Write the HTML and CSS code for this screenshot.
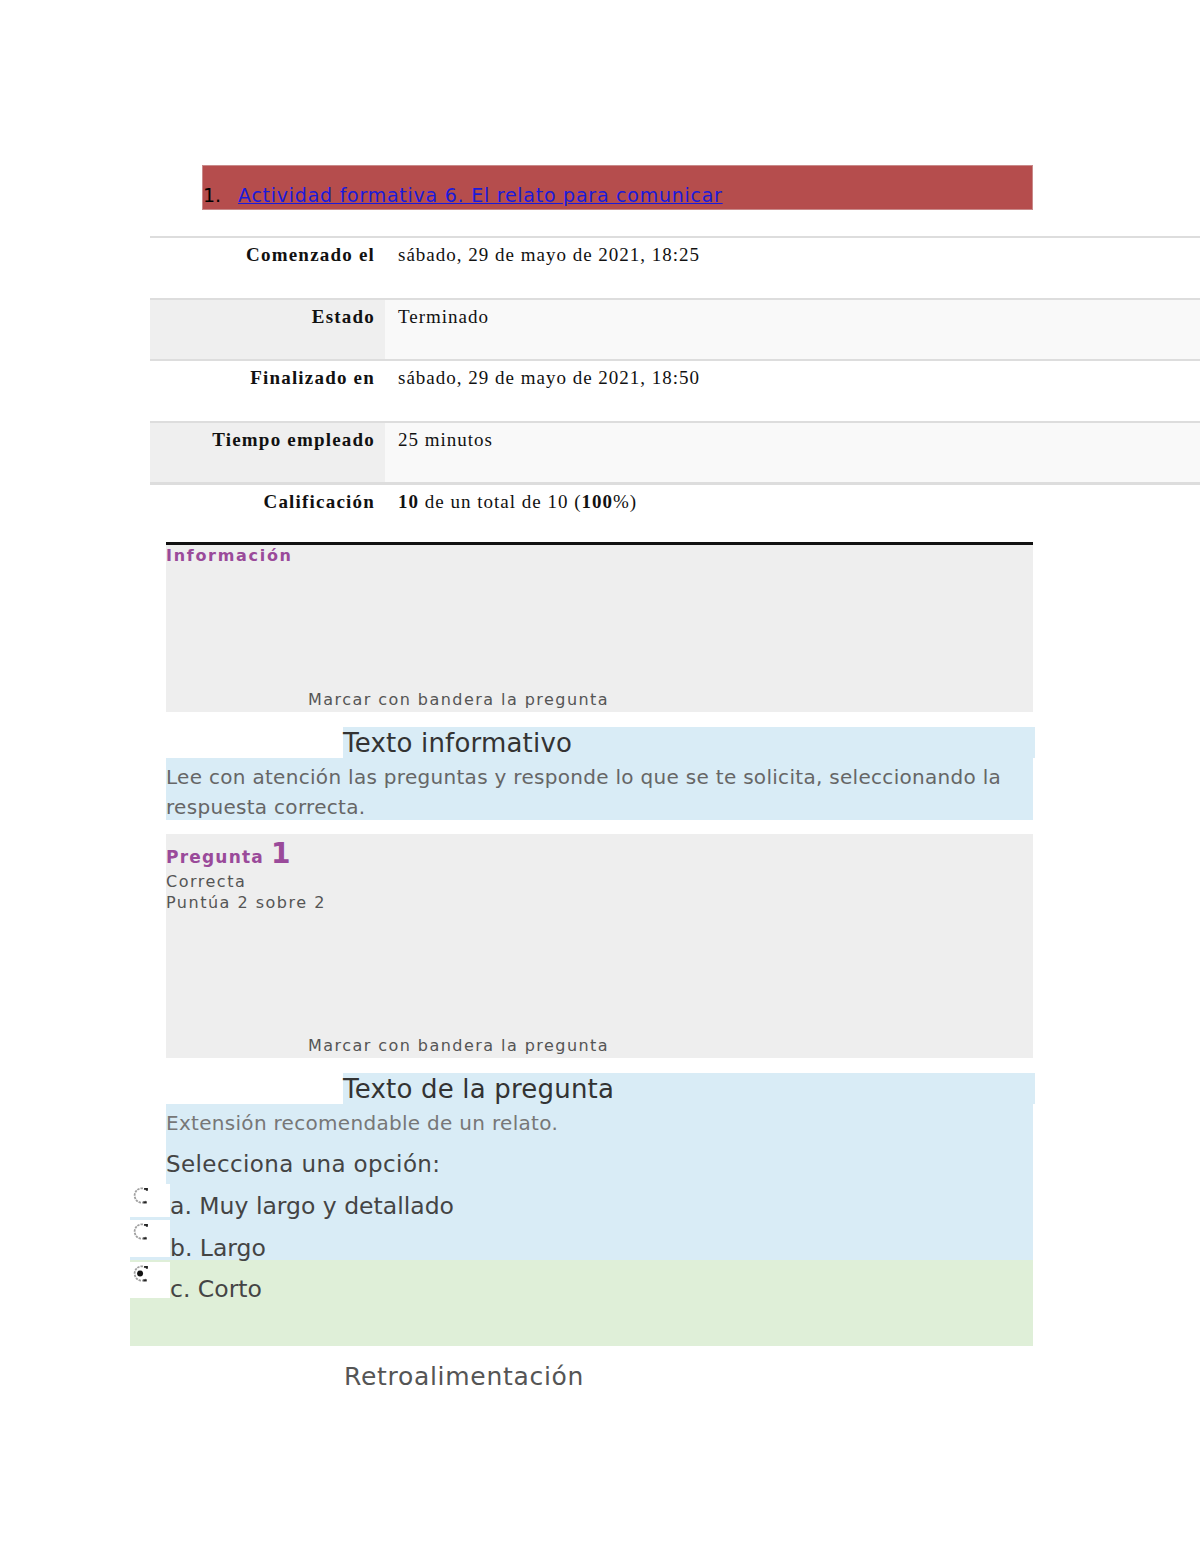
FILE: index.html
```html
<!DOCTYPE html>
<html lang="es">
<head>
<meta charset="utf-8">
<title>Actividad formativa 6</title>
<link rel="stylesheet" href="styles.css">
</head>
<body>
<div class="page">
  <div class="crumb"><span class="num">1.</span><a href="#" class="crumb-link">Actividad formativa 6. El relato para comunicar</a></div>

  <div class="summary">
    <div class="row">
      <div class="lbl">Comenzado el</div>
      <div class="val">sábado, 29 de mayo de 2021, 18:25</div>
    </div>
    <div class="row alt">
      <div class="lbl">Estado</div>
      <div class="val">Terminado</div>
    </div>
    <div class="row">
      <div class="lbl">Finalizado en</div>
      <div class="val">sábado, 29 de mayo de 2021, 18:50</div>
    </div>
    <div class="row alt">
      <div class="lbl">Tiempo empleado</div>
      <div class="val">25 minutos</div>
    </div>
    <div class="row last">
      <div class="lbl">Calificación</div>
      <div class="val"><b>10</b> de un total de 10 (<b>100</b>%)</div>
    </div>
  </div>

  <div class="qinfo info">
    <div class="qtitle">Información</div>
    <div class="flag">Marcar con bandera la pregunta</div>
  </div>

  <div class="content">
    <div class="content-head">Texto informativo</div>
    <div class="content-body">
      <p class="para">Lee con atención las preguntas y responde lo que se te solicita, seleccionando la respuesta correcta.</p>
    </div>
  </div>

  <div class="qinfo question">
    <div class="qtitle">Pregunta <span class="qno">1</span></div>
    <div class="state">Correcta</div>
    <div class="state">Puntúa 2 sobre 2</div>
    <div class="flag">Marcar con bandera la pregunta</div>
  </div>

  <div class="content">
    <div class="content-head">Texto de la pregunta</div>
    <div class="content-body qbody">
      <p class="qtext">Extensión recomendable de un relato.</p>
      <p class="prompt">Selecciona una opción:</p>
    </div>
    <div class="options">
      <div class="opt opt-a">
        <div class="radio-cell"><svg class="radio" viewBox="0 0 16 16" width="19" height="19"><path d="M11.8 3.2 A6 6 0 1 0 11.8 12.8" fill="none" stroke="#a0a0a0" stroke-width="1.5" stroke-dasharray="2 0.8"/><path d="M10.2 2.4 L12.6 2.4 L12.6 4" fill="none" stroke="#222" stroke-width="1.6"/><path d="M9.6 13.8 L12.4 13.8" stroke="#222" stroke-width="1.8"/></svg></div>
        <div class="opt-text">a. Muy largo y detallado</div>
      </div>
      <div class="opt opt-b">
        <div class="radio-cell"><svg class="radio" viewBox="0 0 16 16" width="19" height="19"><path d="M11.8 3.2 A6 6 0 1 0 11.8 12.8" fill="none" stroke="#a0a0a0" stroke-width="1.5" stroke-dasharray="2 0.8"/><path d="M10.2 2.4 L12.6 2.4 L12.6 4" fill="none" stroke="#222" stroke-width="1.6"/><path d="M9.6 13.8 L12.4 13.8" stroke="#222" stroke-width="1.8"/></svg></div>
        <div class="opt-text">b. Largo</div>
      </div>
      <div class="opt opt-c">
        <div class="radio-cell"><svg class="radio" viewBox="0 0 16 16" width="19" height="19"><path d="M11.8 3.2 A6 6 0 1 0 11.8 12.8" fill="none" stroke="#a0a0a0" stroke-width="1.5" stroke-dasharray="2 0.8"/><path d="M10.2 2.4 L12.6 2.4 L12.6 4" fill="none" stroke="#222" stroke-width="1.6"/><path d="M9.6 13.8 L12.4 13.8" stroke="#222" stroke-width="1.8"/><circle cx="6.8" cy="8" r="2.5" fill="#111"/></svg></div>
        <div class="opt-text">c. Corto</div>
      </div>
    </div>
  </div>

  <div class="feedback">Retroalimentación</div>
</div>
</body>
</html>
```

FILE: styles.css
```css
* { box-sizing: border-box; }
html, body { margin: 0; padding: 0; background: #fff; }
body { font-family: "DejaVu Sans", Verdana, sans-serif; }
.page { width: 1200px; padding-top: 165px; padding-bottom: 150px; }

.crumb {
  margin-left: 202px;
  width: 831px;
  height: 45px;
  background: #b54d4d;
  border: 1px solid #c98a8a;
  padding-top: 18px;
  font-size: 19px;
  line-height: 23px;
  white-space: nowrap;
}
.crumb .num { color: #000; display: inline-block; width: 35px; }
.crumb-link { color: #1a1adb; text-decoration: underline; letter-spacing: 0.75px; }

.summary { margin-top: 26px; margin-left: 150px; width: 1050px; font-family: "Liberation Serif", "Times New Roman", serif; font-size: 19px; color: #111; letter-spacing: 1px; }
.row { display: flex; border-top: 2px solid #dddddd; height: 62px; }
.row.alt { height: 61px; }
.row.last { border-top-width: 3px; height: 60px; }
.lbl { width: 235px; text-align: right; font-weight: bold; padding: 6px 10px 0 0; letter-spacing: 1.2px; }
.val { flex: 1; padding: 6px 0 0 13px; }
.row.alt .lbl { background: #efefef; }
.row.alt .val { background: #f9f9f9; }

.qinfo {
  margin-left: 166px;
  width: 867px;
  background: #eeeeee;
  position: relative;
  color: #555;
}
.info { border-top: 3px solid #111; height: 170px; }
.question { margin-top: 14px; height: 224px; padding-top: 6px; }
.qtitle { color: #9a4a9a; font-weight: bold; font-size: 16px; letter-spacing: 1.7px; line-height: 22px; }
.question .qtitle { font-size: 17px; line-height: 28px; letter-spacing: 1.2px; }
.qno { font-size: 28px; letter-spacing: 0; }
.state { font-size: 16px; line-height: 21px; letter-spacing: 1.5px; }
.flag { position: absolute; left: 142px; bottom: 0; font-size: 16px; letter-spacing: 1.45px; line-height: 24px; }

.content { margin-top: 15px; }
.content-head {
  margin-left: 343px;
  width: 692px;
  background: #d9ecf6;
  font-size: 26px;
  line-height: 32px;
  height: 31px;
  color: #333;
  letter-spacing: 0.2px;
}
.content-body {
  margin-left: 166px;
  width: 867px;
  background: #d9ecf6;
  color: #666;
}
.para { margin: 0; font-size: 20px; line-height: 30px; padding-top: 4px; height: 62px; letter-spacing: 0.3px; }

.qbody { padding-top: 6px; }
.qtext { margin: 0; font-size: 20px; line-height: 26px; color: #777; letter-spacing: 0.3px; }
.prompt { margin: 0; padding-top: 14px; font-size: 23px; line-height: 28px; color: #444; height: 48px; letter-spacing: 0.4px; }

.options { margin-left: 130px; width: 903px; }
.opt { display: flex; background: #d9ecf6; }
.opt-a { height: 36px; }
.opt-b { height: 40px; }
.opt-c { height: 86px; background: #dfefd8; padding-top: 2px; }
.radio-cell { width: 40px; height: 33px; background: #fff; padding: 2px 0 0 2px; }
.opt-b .radio-cell { height: 37px; }
.opt-c .radio-cell { height: 36px; }
.radio { display: block; }
.opt-text { font-size: 23.5px; line-height: 28px; color: #444; padding-top: 8px; }
.opt-b .opt-text { padding-top: 14px; }
.opt-c .opt-text { padding-top: 13px; }

.feedback { margin-top: 16px; margin-left: 344px; font-size: 25px; line-height: 30px; color: #555; letter-spacing: 0.7px; }
```
